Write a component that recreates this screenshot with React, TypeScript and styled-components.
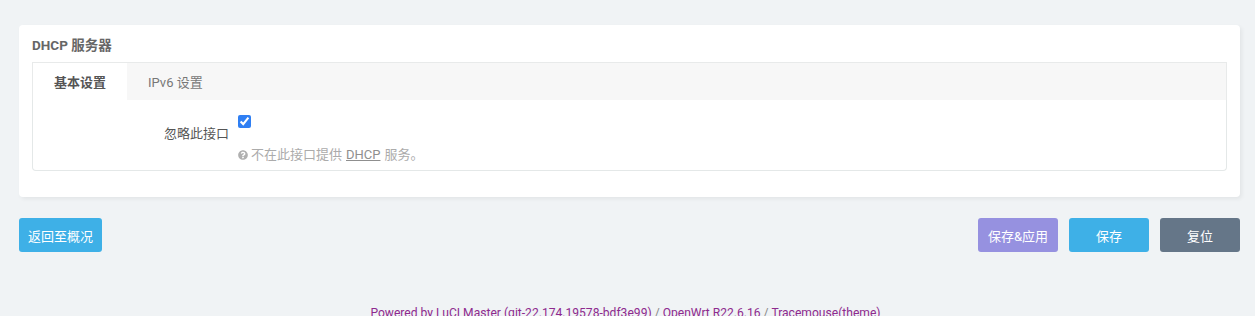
import React from "react";
import styled, { createGlobalStyle } from "styled-components";
import { FaQuestionCircle } from "react-icons/fa";

const GlobalStyle = createGlobalStyle`
  html, body {
    margin: 0;
    padding: 0;
    background: #f0f3f5;
    font-family: Roboto, "Noto Sans CJK SC", "Liberation Sans", sans-serif;
    font-size: 13px;
    color: #555;
  }
`;

const Page = styled.div`
  padding: 25px 15px 0 19px;
  height: 316px;
  box-sizing: border-box;
  overflow: hidden;
`;

const Card = styled.div`
  background: #fff;
  border-radius: 4px;
  box-shadow: 2px 2px 4px rgba(0, 0, 0, 0.06);
  padding: 10px 13px 26px;
`;

const Title = styled.h3`
  margin: 0 0 7px;
  font-size: 13.5px;
  line-height: 20px;
  font-weight: 700;
  color: #666;
`;

const Tabs = styled.div`
  border: 1px solid #e8eaea;
  border-bottom: none;
  background: #f7f7f7;
  display: flex;
  height: 37px;
`;

const Tab = styled.div<{ $active?: boolean }>`
  padding: 0 21px;
  display: flex;
  align-items: center;
  justify-content: center;
  background: ${p => (p.$active ? "#fff" : "transparent")};
  color: ${p => (p.$active ? "#555" : "#777")};
  font-weight: ${p => (p.$active ? 600 : 400)};
  font-size: 13px;
`;

const Panel = styled.div`
  border: 1px solid #e4e8e8;
  border-top: none;
  border-radius: 0 0 4px 4px;
  padding: 15px 0 5px;
`;

const Row = styled.div`
  display: grid;
  grid-template-columns: 196px 1fr;
  column-gap: 9px;
`;

const Label = styled.label`
  text-align: right;
  padding-top: 9px;
  line-height: 20px;
  font-size: 13px;
  color: #555;
`;

const Field = styled.div`
  display: flex;
  flex-direction: column;
  align-items: flex-start;
`;

const Check = styled.input`
  margin: 0;
  width: 13px;
  height: 13px;
  accent-color: #2f7ff3;
`;

const Help = styled.div`
  margin-top: 17px;
  line-height: 20px;
  font-size: 13px;
  color: #ababab;
  display: flex;
  align-items: center;

  svg {
    width: 10px;
    height: 10px;
    margin-right: 3px;
    color: #b0b0b0;
  }
`;

const Abbr = styled.abbr`
  text-decoration: underline;
  color: #8f8f8f;
  margin: 0 4px;
`;

const Actions = styled.div`
  margin-top: 21px;
  display: flex;
  align-items: center;
  gap: 11px;
`;

const Spacer = styled.div`
  flex: 1;
`;

const Button = styled.button<{ $color: string }>`
  height: 34px;
  min-width: 80px;
  padding: 0 9px;
  border: none;
  border-radius: 3px;
  background: ${p => p.$color};
  color: #fff;
  font-family: inherit;
  font-size: 13px;
  cursor: pointer;
`;

const Footer = styled.footer`
  margin: 52px 0 0 -8px;
  text-align: center;
  font-size: 12.1px;
  line-height: 18px;
  color: #888;
`;

const FooterLink = styled.a`
  color: #8e2a8e;
  text-decoration: none;
`;

export default function App() {
  return (
    <>
      <GlobalStyle />
      <Page>
        <Card>
          <Title>DHCP 服务器</Title>
          <Tabs>
            <Tab $active>基本设置</Tab>
            <Tab>IPv6 设置</Tab>
          </Tabs>
          <Panel>
            <Row>
              <Label>忽略此接口</Label>
              <Field>
                <Check type="checkbox" defaultChecked />
                <Help>
                  <FaQuestionCircle />
                  不在此接口提供<Abbr>DHCP</Abbr>服务。
                </Help>
              </Field>
            </Row>
          </Panel>
        </Card>
        <Actions>
          <Button $color="#3eb0e7">返回至概况</Button>
          <Spacer />
          <Button $color="#9691e0">保存&amp;应用</Button>
          <Button $color="#3eb0e7">保存</Button>
          <Button $color="#657688">复位</Button>
        </Actions>
        <Footer>
          <FooterLink>Powered by LuCI Master (git-22.174.19578-bdf3e99)</FooterLink> /{" "}
          <FooterLink>OpenWrt R22.6.16</FooterLink> / <FooterLink>Tracemouse(theme)</FooterLink>
        </Footer>
      </Page>
    </>
  );
}
